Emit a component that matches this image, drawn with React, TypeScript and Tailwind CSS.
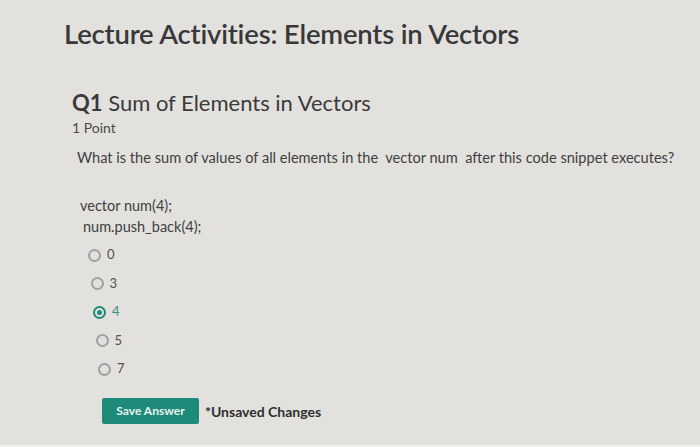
const options = ['0', '3', '4', '5', '7'];

export default function App() {
  const selected = '4';
  return (
    <div
      className="h-[447px] w-[700px] overflow-hidden bg-[#e2e1dd] text-[#3b3b3d] border-b-2 border-[#f0efec]"
      style={{ fontFamily: 'Lato, "Open Sans", sans-serif' }}
    >
      <div className="pl-[64px] pt-[17px]">
        <h1 className="text-[27.5px] font-semibold leading-[34px] tracking-[-0.2px] text-[#38383a]">
          Lecture Activities: Elements in Vectors
        </h1>
      </div>

      <div className="pl-[72px] pt-[39px]">
        <h2 className="text-[22px] leading-[26px] text-[#3a3a3c]">
          <span className="font-bold">Q1</span> Sum of Elements in Vectors
        </h2>
        <p className="mt-[4px] text-[14px] leading-[16px] text-[#4a4a4c]">1 Point</p>
      </div>

      <p className="mt-[13px] pl-[77px] text-[14.6px] leading-[18px] text-[#3f3f41]">
        What is the sum of values of all elements in the&nbsp; vector num&nbsp; after this code snippet executes?
      </p>

      <div className="mt-[28px] pl-[80px] text-[14.5px] leading-[21px] text-[#3f3f41]">
        <div>vector num(4);</div>
        <div className="pl-[3px]">num.push_back(4);</div>
      </div>

      <div className="mt-[8px] flex flex-col gap-[8.5px] pl-[88px]">
        {options.map((o, i) => (
          <label key={o} className="flex h-[20px] items-center gap-[6px]" style={{ marginLeft: i * 2.5 }}>
            <span
              className={
                o === selected
                  ? 'flex h-[13px] w-[13px] items-center justify-center rounded-full border-2 border-[#1f8a78]'
                  : 'h-[13px] w-[13px] rounded-full border-2 border-[#a0a0a0]'
              }
            >
              {o === selected && <span className="h-[5px] w-[5px] rounded-full bg-[#1f8a78]" />}
            </span>
            <span className={o === selected ? 'text-[13px] text-[#3a8f82]' : 'text-[13px] text-[#505052]'}>{o}</span>
          </label>
        ))}
      </div>

      <div className="mt-[19px] flex items-center gap-[6px] pl-[102px]">
        <button className="h-[26px] w-[97px] rounded-[2px] bg-[#1e8a79] text-[12px] font-bold text-[#e8f3f0]">
          Save Answer
        </button>
        <span className="text-[14px] font-bold text-[#2e2e30]">*Unsaved Changes</span>
      </div>
    </div>
  );
}
